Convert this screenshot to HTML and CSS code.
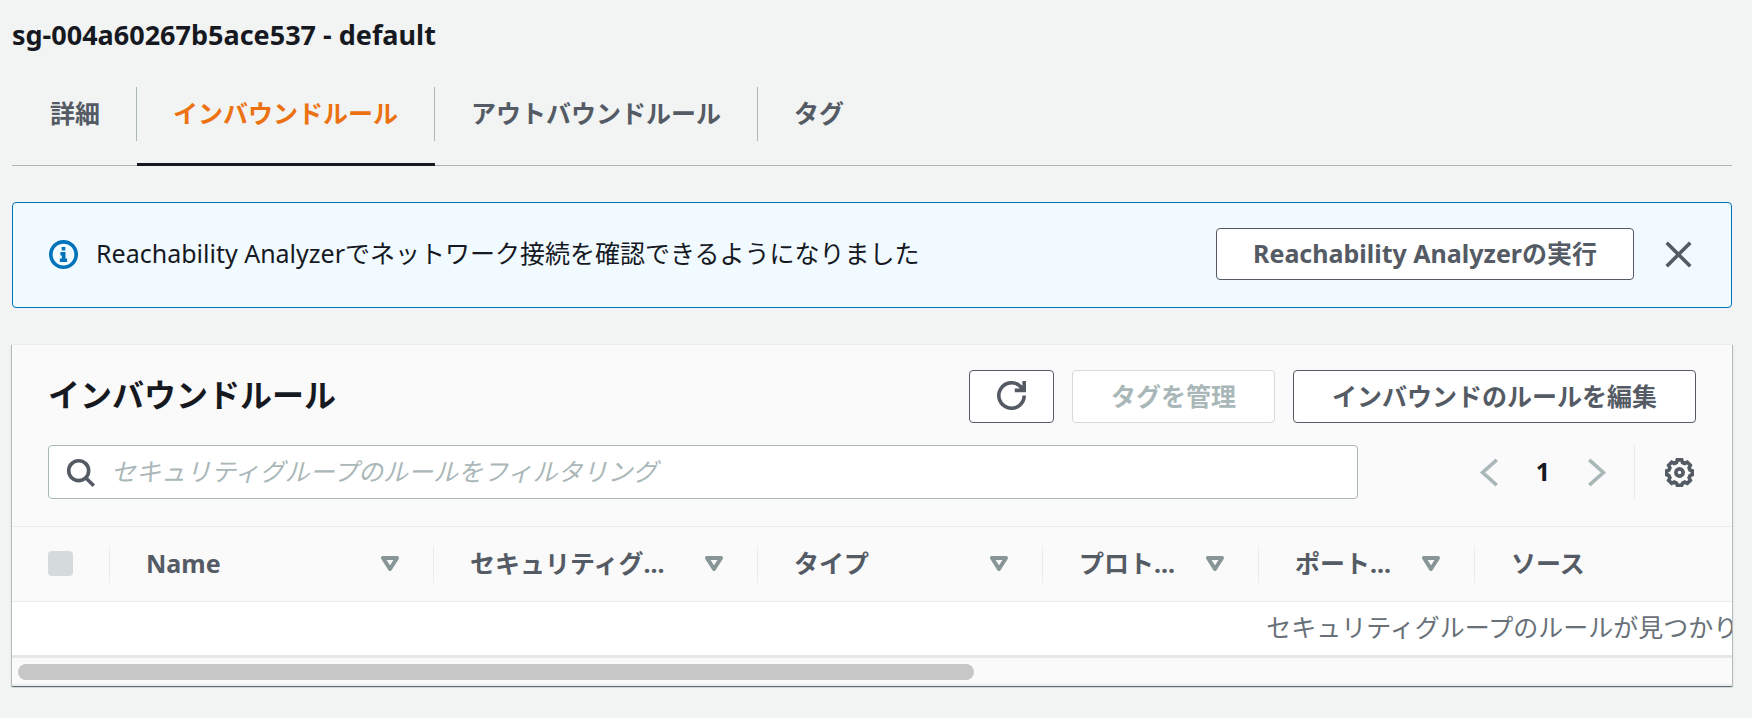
FILE: index.html
```html
<!DOCTYPE html>
<html lang="ja">
<head>
    <meta charset="UTF-8">
    <title>sg-004a60267b5ace537 - default</title>
    <link rel="stylesheet" href="styles.css">
</head>
<body>
    <div id="container">
        <h2 class="sg-name">sg-004a60267b5ace537 - default</h2>

        <ul class="tabs">
            <li><a href="#detail">詳細</a></li>
            <li class="selected"><a href="#inbound">インバウンドルール</a></li>
            <li><a href="#outbound">アウトバウンドルール</a></li>
            <li><a href="#tag">タグ</a></li>
        </ul>

        <div class="notice">
            <svg class="icon info" viewBox="0 0 16 16">
                <circle cx="8" cy="8" r="7"/>
                <path d="M8 3.8v2M6.3 7.6h1.8v3.6M6 11.2h4"/>
            </svg>
            <p>Reachability Analyzerでネットワーク接続を確認できるようになりました</p>
            <button class="btn">Reachability Analyzerの実行</button>
            <button class="icon-btn close" aria-label="閉じる">
                <svg class="icon" viewBox="0 0 16 16"><path d="M1.5 1.5l13 13M14.5 1.5l-13 13"/></svg>
            </button>
        </div>

        <div class="panel">
            <div class="panel-head">
                <h1>インバウンドルール</h1>
                <button class="btn" aria-label="更新">
                    <svg class="icon" viewBox="0 0 16 16"><path d="M15 8a7 7 0 1 1-2-4.9L15 5M15 0v5.2H9.8"/></svg>
                </button>
                <button class="btn" disabled>タグを管理</button>
                <button class="btn">インバウンドのルールを編集</button>
            </div>

            <div class="panel-tools">
                <div class="search">
                    <svg class="icon" viewBox="0 0 16 16"><circle cx="7" cy="7" r="5.5"/><path d="M11 11l4.3 4.3"/></svg>
                    <input type="text" aria-label="フィルタリング" placeholder="セキュリティグループのルールをフィルタリング">
                </div>
                <div class="pages">
                    <button class="icon-btn" aria-label="前へ" disabled>
                        <svg class="icon" viewBox="0 0 16 16"><path d="M12 1L4.2 8l7.8 7"/></svg>
                    </button>
                    <span>1</span>
                    <button class="icon-btn" aria-label="次へ" disabled>
                        <svg class="icon" viewBox="0 0 16 16"><path d="M4 1l7.8 7L4 15"/></svg>
                    </button>
                </div>
                <button class="icon-btn setting" aria-label="設定">
                    <svg class="icon" viewBox="0 0 16 16">
                        <path d="M6.8 1h2.4l.5 1.5 1.2.5 1.4-.7L14 4l-.7 1.4.5 1.2L15 7v2.2l-1.2.5-.5 1.2.7 1.4-1.7 1.7-1.4-.7-1.2.5-.5 1.2H6.8l-.5-1.2-1.2-.5-1.4.7L2 12.3l.7-1.4-.5-1.2L1 9.2V7l1.2-.4.5-1.2L2 4l1.7-1.7 1.4.7 1.2-.5z"/>
                        <circle cx="8" cy="8" r="2"/>
                    </svg>
                </button>
            </div>

            <div class="table-wrap">
                <table>
                    <thead>
                        <tr>
                            <th class="col-check"><div><input type="checkbox" aria-label="すべて選択" disabled></div></th>
                            <th class="col-l"><div>Name<button class="sort" aria-label="並べ替え"><svg viewBox="0 0 18 15"><path d="M2 2h14L9 13z"/></svg></button></div></th>
                            <th class="col-l"><div>セキュリティグ...<button class="sort" aria-label="並べ替え"><svg viewBox="0 0 18 15"><path d="M2 2h14L9 13z"/></svg></button></div></th>
                            <th class="col-m"><div>タイプ<button class="sort" aria-label="並べ替え"><svg viewBox="0 0 18 15"><path d="M2 2h14L9 13z"/></svg></button></div></th>
                            <th class="col-s"><div>プロト...<button class="sort" aria-label="並べ替え"><svg viewBox="0 0 18 15"><path d="M2 2h14L9 13z"/></svg></button></div></th>
                            <th class="col-s"><div>ポート...<button class="sort" aria-label="並べ替え"><svg viewBox="0 0 18 15"><path d="M2 2h14L9 13z"/></svg></button></div></th>
                            <th><div>ソース</div></th>
                        </tr>
                    </thead>
                    <tbody>
                        <tr>
                            <td colspan="7">セキュリティグループのルールが見つかりません</td>
                        </tr>
                    </tbody>
                </table>
            </div>
            <div class="scrollbar"><div class="thumb"></div></div>
        </div>
    </div>
</body>
</html>
```

FILE: styles.css
```css
*{
    margin: 0;
    padding: 0;
    box-sizing: border-box;
}
body{
    background: #f2f3f3;
    color: #16191f;
    font-family: "Noto Sans", "Noto Sans CJK JP", sans-serif;
    font-size: 25px;
    line-height: 36px;
}
button, input{
    font: inherit;
    color: inherit;
}
ul{
    list-style: none;
}
#container{
    padding: 17px 20px 31px 12px;
}
.icon{
    display: block;
    flex: none;
    width: 29px;
    height: 29px;
    fill: none;
    stroke: currentColor;
    stroke-width: 2;
}
.sg-name{
    font-size: 27px;
    line-height: 36px;
}

/* tabs */
.tabs{
    display: flex;
    margin-top: 34px;
    padding-left: 2px;
    border-bottom: 1px solid #aab7b8;
}
.tabs li{
    height: 78px;
}
.tabs a{
    display: block;
    padding: 8px 36px 10px;
    border-right: 1px solid #aab7b8;
    color: #545b64;
    font-weight: bold;
    text-decoration: none;
}
.tabs li:last-child a{
    border-right: none;
}
.tabs .selected{
    height: 79px;
    margin-bottom: -1px;
    border-bottom: 3px solid #16191f;
}
.tabs .selected a{
    color: #ec7211;
}

/* buttons */
.btn{
    height: 52px;
    padding: 0 36px 2px;
    background: #fff;
    border: 1px solid #545b64;
    border-radius: 4px;
    color: #545b64;
    font-weight: bold;
    white-space: nowrap;
}
.btn:disabled{
    border-color: #d5dbdb;
    color: #aab7b8;
}
.icon-btn{
    background: none;
    border: none;
    color: #545b64;
}
.icon-btn:disabled{
    color: #aab7b8;
}

/* notice */
.notice{
    display: flex;
    align-items: center;
    margin-top: 36px;
    padding: 25px 38px 27px 36px;
    background: #f1faff;
    border: 1px solid #0073bb;
    border-radius: 4px;
}
.notice .info{
    color: #0073bb;
}
.notice p{
    flex: 1;
    padding: 0 0 2px 18px;
}
.notice .close{
    margin-left: 30px;
}

/* panel */
.panel{
    margin-top: 36px;
    background: #fafafa;
    border-top: 1px solid #eaeded;
    box-shadow: 0 1px 1px rgba(0, 28, 36, .4), 1px 1px 1px rgba(0, 28, 36, .2), -1px 1px 1px rgba(0, 28, 36, .2);
}
.panel-head{
    display: flex;
    gap: 18px;
    padding: 25px 36px 0;
}
.panel-head h1{
    flex: 1;
    font-size: 32px;
    line-height: 50px;
}
.panel-head .btn{
    height: 53px;
    padding: 0 38px 2px;
}
.panel-head .icon{
    margin: 0 -11px;
}
.panel-tools{
    display: flex;
    align-items: center;
    padding: 22px 38px 27px 36px;
}
.search{
    display: flex;
    align-items: center;
    flex: 1;
    height: 54px;
    padding-left: 17px;
    background: #fff;
    border: 1px solid #aab7b8;
    border-radius: 4px;
    color: #545b64;
}
.search input{
    flex: 1;
    height: 52px;
    padding: 0 0 2px 16px;
    background: none;
    border: none;
    outline: none;
}
.search input::placeholder{
    color: #aab7b8;
    font-style: italic;
}
.pages{
    display: flex;
    align-items: center;
    gap: 32px;
    margin-left: 117px;
    font-weight: bold;
}
.pages span{
    padding-bottom: 2px;
}
.setting{
    height: 54px;
    margin-left: 23px;
    padding-left: 30px;
    border-left: 1px solid #eaeded;
}

/* table */
.table-wrap{
    overflow: hidden;
}
table{
    width: 177.6%;
    table-layout: fixed;
    border-collapse: collapse;
}
th{
    height: 75px;
    border-top: 1px solid #eaeded;
    border-bottom: 1px solid #eaeded;
    color: #545b64;
    text-align: left;
}
th div{
    display: flex;
    align-items: center;
    justify-content: space-between;
    height: 37px;
    padding: 0 34px 2px 36px;
    border-right: 1px solid #eaeded;
    white-space: nowrap;
}
th:last-child div{
    border-right: none;
}
.col-check{
    width: 98px;
}
.col-l{
    width: 324px;
}
.col-m{
    width: 285px;
}
.col-s{
    width: 216px;
}
th input{
    appearance: none;
    width: 25px;
    height: 25px;
    background: #d5dbdb;
    border-radius: 4px;
}
.sort{
    background: none;
    border: none;
}
.sort svg{
    display: block;
    width: 18px;
    height: 15px;
    fill: none;
    stroke: #879596;
    stroke-width: 4;
    stroke-linejoin: round;
}
td{
    height: 53px;
    padding-bottom: 2px;
    background: #fff;
    color: #687078;
    text-align: center;
}
.scrollbar{
    padding: 6px 6px 4px;
    border-top: 3px solid #e8e8e8;
    border-bottom: 2px solid #ededed;
}
.thumb{
    width: 56%;
    height: 16px;
    background: #c7c7c7;
    border-radius: 8px;
}
```
